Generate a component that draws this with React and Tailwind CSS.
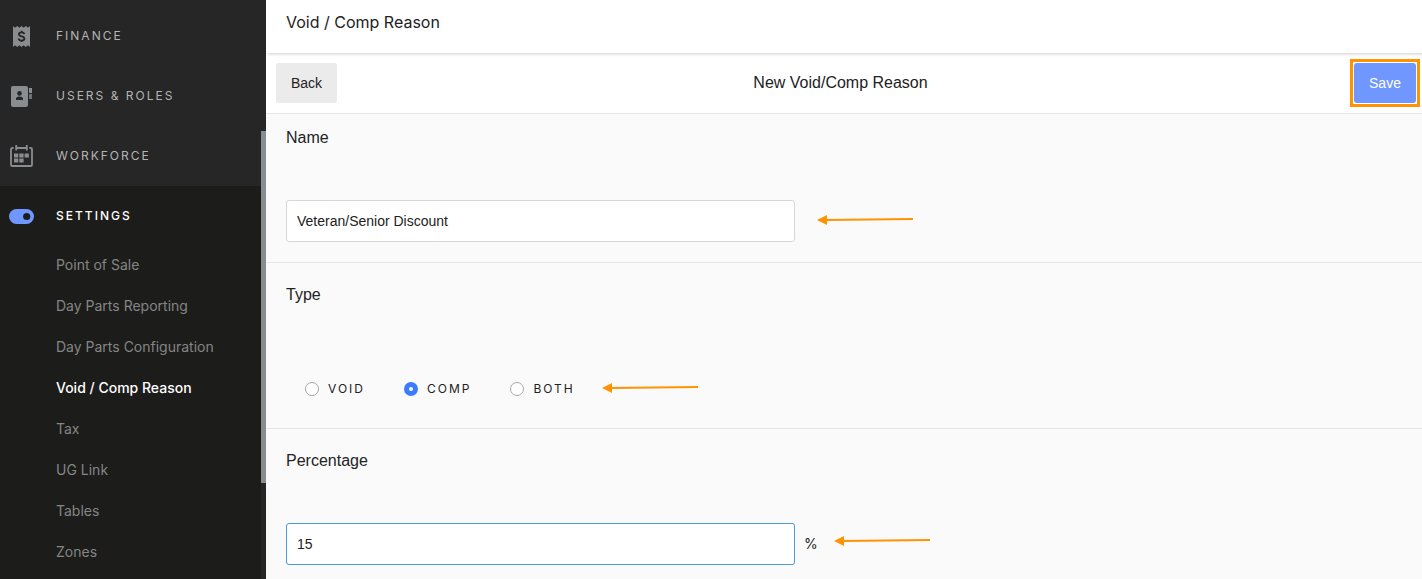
import React, { useState } from "react";

// sidebar icons, 28x28
function FinanceIcon() {
  return (
    <svg width="28" height="28" viewBox="0 0 28 28" aria-hidden="true">
      <path
        fill="#8a8d90"
        d="M5 4l2 1.8L9.2 4l2.2 1.8L13.5 4l2.2 1.8L17.8 4 20 5.8 22 4v21l-2-1.8-2.2 1.8-2.1-1.8-2.2 1.8-2.1-1.8L9.2 25 7 23.2 5 25z"
      />
      <path
        fill="none"
        stroke="#262626"
        strokeWidth="1.8"
        d="M16.3 12.2c-.2-1.3-1.3-1.9-2.7-1.9-1.6 0-2.7.7-2.7 1.9 0 2.9 5.5 1.4 5.5 4.4 0 1.3-1.2 2-2.8 2s-2.8-.8-2.9-2.1M13.6 8.8v1.6M13.6 18.4V20"
      />
    </svg>
  );
}

function UsersIcon() {
  return (
    <svg width="28" height="28" viewBox="0 0 28 28" aria-hidden="true">
      <rect x="3" y="4" width="17" height="21" rx="2" fill="#8a8d90" />
      <path fill="#8a8d90" d="M21 6h3v5h-3z" />
      <path fill="#6f7275" d="M21 12h3v5h-3z" />
      <circle cx="11.5" cy="11.4" r="2.3" fill="#262626" />
      <path fill="#262626" d="M8 18v-1.2c0-1.6 1.6-2.4 3.5-2.4s3.5.8 3.5 2.4V18z" />
    </svg>
  );
}

function WorkforceIcon() {
  return (
    <svg width="28" height="28" viewBox="0 0 28 28" aria-hidden="true">
      <g fill="none" stroke="#8a8d90" strokeWidth="1.8">
        <path d="M5.6 6H4.4C3.5 6 3 6.5 3 7.3v15.400c0 .8.5 1.300 1.400 1.300h18.200c.9 0 1.400-.5 1.400-1.300V7.300c0-.8-.5-1.300-1.400-1.300h-1.200M9 6h9" />
        <path d="M8.200 3v5.500M18.800 3v5.500" />
      </g>
      <path
        fill="#8a8d90"
        d="M6 11.500h4.300v4H6zM11.300 11.500h4.300v4h-4.300zM16.600 11.500h4.300v4h-4.300zM6 16.500h4.300v4H6zM11.300 16.500h4.300v4h-4.300z"
      />
    </svg>
  );
}

function SettingsIcon() {
  return (
    <svg width="28" height="28" viewBox="0 0 28 28" aria-hidden="true">
      <rect x="1" y="7" width="25" height="15" rx="7.5" fill="#7096ff" />
      <circle cx="18.700" cy="14.500" r="3.600" fill="#1c1c1a" />
    </svg>
  );
}

// hint arrow pointing left at a field
function Arrow({ className }) {
  return (
    <svg
      className={className}
      width="96"
      height="10"
      viewBox="0 0 96 10"
      aria-hidden="true"
    >
      <path d="M8 5L96 4" stroke="#ff9400" strokeWidth="2" />
      <path d="M0 5L10 0v10z" fill="#ff9400" />
    </svg>
  );
}

const menus = [
  { label: "FINANCE", Icon: FinanceIcon },
  { label: "USERS & ROLES", Icon: UsersIcon },
  { label: "WORKFORCE", Icon: WorkforceIcon },
];

const settings = [
  "Point of Sale",
  "Day Parts Reporting",
  "Day Parts Configuration",
  "Void / Comp Reason",
  "Tax",
  "UG Link",
  "Tables",
  "Zones",
];

const types = ["VOID", "COMP", "BOTH"];

function Sidebar() {
  return (
    <aside className="flex w-[266px] shrink-0 overflow-hidden bg-[#262626] font-['Inter',sans-serif]">
      <nav className="flex flex-1 flex-col pt-[6px]">
        {menus.map(({ label, Icon }) => (
          <a
            key={label}
            href="#"
            className="flex h-[60px] shrink-0 items-center gap-5 pl-2 text-xs tracking-[2px] text-[#b4b4b4]"
          >
            <Icon />
            {label}
          </a>
        ))}
        <div className="flex-1 bg-[#1c1c1a]">
          <a
            href="#"
            className="flex h-[60px] items-center gap-5 pl-2 text-xs font-medium tracking-[2px] text-white"
          >
            <SettingsIcon />
            SETTINGS
          </a>
          <ul>
            {settings.map((item) => (
              <li key={item}>
                <a
                  href="#"
                  className={
                    item === "Void / Comp Reason"
                      ? "block pb-[3px] pl-14 text-sm leading-[38px] font-medium text-white"
                      : "block pb-[3px] pl-14 text-sm leading-[38px] text-[#858585]"
                  }
                >
                  {item}
                </a>
              </li>
            ))}
          </ul>
        </div>
      </nav>

      {/* scrollbar */}
      <div className="flex w-[5px] flex-col">
        <div className="flex-[131]" />
        <div className="flex-[352] bg-[#8a8d90]" />
        <div className="flex-[96]" />
      </div>
    </aside>
  );
}

function App() {
  const [name, setName] = useState("Veteran/Senior Discount");
  const [type, setType] = useState("COMP");
  const [percentage, setPercentage] = useState("15");

  return (
    <div className="flex h-screen overflow-hidden bg-[#fafafa] font-['Liberation_Sans',Arial,sans-serif] text-[#222]">
      <Sidebar />

      <main className="min-w-0 flex-1">
        <header className="relative h-[53px] bg-white px-5 pt-[10px] shadow-[2px_1px_3px_rgba(0,0,0,0.2)]">
          <h1 className="font-['Inter',sans-serif] text-base leading-6">
            Void / Comp Reason
          </h1>
        </header>

        <div className="flex h-[61px] items-center border-b border-[#e6e6e6] bg-white pr-[2px] pl-[10px]">
          <button
            type="button"
            className="h-10 w-[61px] rounded-[3px] bg-[#ebebeb] text-sm"
          >
            Back
          </button>
          <h2 className="flex-1 text-center text-base">New Void/Comp Reason</h2>
          <div className="ml-[6px] border-[3px] border-[#ff9400] p-px">
            <button
              type="button"
              className="block h-10 w-[62px] rounded-[3px] bg-[#7096ff] text-sm text-white"
            >
              Save
            </button>
          </div>
        </div>

        <form>
          <section className="border-b border-[#e6e6e6] px-5 pt-3 pb-5">
            <label htmlFor="name" className="block text-base leading-6">
              Name
            </label>
            <div className="mt-[50px] flex items-center">
              <input
                id="name"
                type="text"
                value={name}
                onChange={(e) => setName(e.target.value)}
                className="h-[42px] w-[509px] rounded-[3px] border border-[#d6d6d6] bg-white px-[10px] text-sm outline-none"
              />
              <Arrow className="mb-[2px] ml-[22px]" />
            </div>
          </section>

          <section className="border-b border-[#e6e6e6] px-5 pt-5 pb-[27px]">
            <h3 id="type-label" className="text-base leading-6">
              Type
            </h3>
            <div className="mt-[70px] flex items-center">
              <div
                role="radiogroup"
                aria-labelledby="type-label"
                className="flex gap-[39px] pl-[19px]"
              >
                {types.map((item) => (
                  <label
                    key={item}
                    className="flex items-center gap-[9px] font-['Inter',sans-serif] text-xs leading-6 tracking-[2px]"
                  >
                    <input
                      type="radio"
                      name="type"
                      value={item}
                      checked={type === item}
                      onChange={() => setType(item)}
                      className="size-[14px] appearance-none rounded-full border border-[#a6a6a6] bg-white checked:border-[5px] checked:border-[#3b7cff]"
                    />
                    {item}
                  </label>
                ))}
              </div>
              <Arrow className="mb-[3px] ml-[27px]" />
            </div>
          </section>

          <section className="px-5 pt-5 pb-5">
            <label htmlFor="percentage" className="block text-base leading-6">
              Percentage
            </label>
            <div className="mt-[50px] flex items-center">
              <input
                id="percentage"
                type="text"
                value={percentage}
                onChange={(e) => setPercentage(e.target.value)}
                className="h-[42px] w-[509px] rounded-[3px] border border-[#4a9ade] bg-white px-[10px] text-sm outline-none"
              />
              <span className="ml-[9px] font-['Inter',sans-serif] text-sm">%</span>
              <Arrow className="mb-[7px] ml-4" />
            </div>
          </section>
        </form>
      </main>
    </div>
  );
}

export default App;
